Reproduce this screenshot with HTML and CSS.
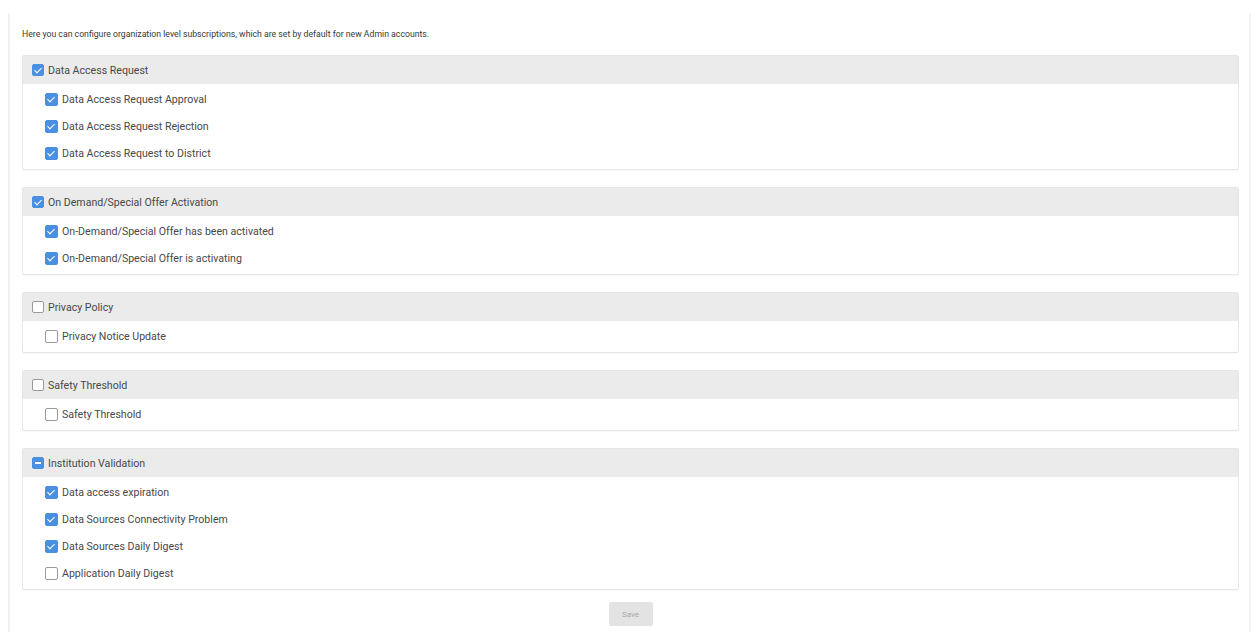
FILE: index.html
```html
<!DOCTYPE html>
<html lang="en">
<head>
    <meta charset="UTF-8">
    <meta name="viewport" content="width=device-width, initial-scale=1.0">
    <title>Subscriptions</title>
    <link rel="stylesheet" href="styles.css">
</head>
<body>
    <div class="panel">
        <p class="intro">Here you can configure organization level subscriptions, which are set by default for new Admin accounts.</p>

        <div class="group">
            <div class="group-head"><span class="box on"></span>Data Access Request</div>
            <div class="group-body">
                <div class="row"><span class="box on"></span>Data Access Request Approval</div>
                <div class="row"><span class="box on"></span>Data Access Request Rejection</div>
                <div class="row"><span class="box on"></span>Data Access Request to District</div>
            </div>
        </div>

        <div class="group">
            <div class="group-head"><span class="box on"></span>On Demand/Special Offer Activation</div>
            <div class="group-body">
                <div class="row"><span class="box on"></span>On-Demand/Special Offer has been activated</div>
                <div class="row"><span class="box on"></span>On-Demand/Special Offer is activating</div>
            </div>
        </div>

        <div class="group">
            <div class="group-head"><span class="box"></span>Privacy Policy</div>
            <div class="group-body">
                <div class="row"><span class="box"></span>Privacy Notice Update</div>
            </div>
        </div>

        <div class="group">
            <div class="group-head"><span class="box"></span>Safety Threshold</div>
            <div class="group-body">
                <div class="row"><span class="box"></span>Safety Threshold</div>
            </div>
        </div>

        <div class="group">
            <div class="group-head"><span class="box mixed"></span>Institution Validation</div>
            <div class="group-body">
                <div class="row"><span class="box on"></span>Data access expiration</div>
                <div class="row"><span class="box on"></span>Data Sources Connectivity Problem</div>
                <div class="row"><span class="box on"></span>Data Sources Daily Digest</div>
                <div class="row"><span class="box"></span>Application Daily Digest</div>
            </div>
        </div>

        <div class="actions">
            <button class="save" disabled>Save</button>
        </div>
    </div>
</body>
</html>
```

FILE: styles.css
```css
body {
    margin: 0;
    background: #fff;
    font-family: Roboto, "Liberation Sans", sans-serif;
    color: #484848;
}

.panel {
    margin: 13px 5px 0 8px;
    height: 619px;
    box-sizing: border-box;
    padding: 0 10px 0 12px;
    border-left: 2px solid #f2f2f2;
    border-right: 2px solid #f2f2f2;
}

.intro {
    margin: 0;
    padding-top: 16px;
    font-size: 8.7px;
    line-height: 10px;
    color: #383838;
}

.group {
    margin-top: 16px;
    border: 1px solid #e6e6e6;
    border-radius: 2px;
    box-shadow: 0 1px 1px rgba(0, 0, 0, 0.03);
}

.group + .group {
    margin-top: 17px;
}

.group:last-of-type {
    margin-top: 18px;
}

.group-head {
    display: flex;
    align-items: center;
    height: 28px;
    padding-left: 9px;
    background: #ebebeb;
    font-size: 10.6px;
}

.group-body {
    padding: 2px 0 2px 22px;
}

.row {
    display: flex;
    align-items: center;
    height: 27px;
    font-size: 10.6px;
}

.box {
    width: 10px;
    height: 10px;
    margin-right: 4px;
    border: 1px solid #9a9a9a;
    border-radius: 2px;
    background: #fff;
    flex: none;
    position: relative;
}

.row .box {
    width: 11px;
    height: 11px;
}

.box.on,
.box.mixed {
    border-color: #4a90e2;
    background: #4a90e2;
}

.box.on::after {
    content: "";
    position: absolute;
    left: 3px;
    top: 1px;
    width: 3px;
    height: 6px;
    border: solid #fff;
    border-width: 0 1px 1px 0;
    transform: rotate(45deg);
}

.box.mixed::after {
    content: "";
    position: absolute;
    left: 2px;
    right: 2px;
    top: 4px;
    height: 2px;
    background: #fff;
}

.actions {
    display: flex;
    justify-content: center;
    padding-top: 12px;
}

.save {
    width: 44px;
    height: 24px;
    border: none;
    border-radius: 2px;
    background: #e3e3e3;
    color: #a8a8a8;
    font-family: Roboto, "Liberation Sans", sans-serif;
    font-size: 8px;
}
```
